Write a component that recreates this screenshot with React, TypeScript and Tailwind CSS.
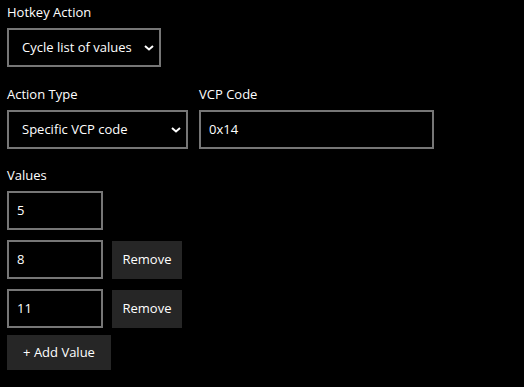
import { useState } from 'react';

function Chevron() {
  return (
    <svg width="10" height="6" viewBox="0 0 10 6" className="shrink-0">
      <path d="M1 1l4 3.5L9 1" fill="none" stroke="white" strokeWidth="2" />
    </svg>
  );
}

export default function App() {
  const [values] = useState(['5', '8', '11']);

  return (
    <div
      className="min-h-screen w-full bg-black text-white text-[13px] pl-[7px] pt-[3px]"
      style={{ fontFamily: '"Open Sans", "Noto Sans", sans-serif' }}
    >
      {/* Hotkey action */}
      <div className="leading-[18px]">Hotkey Action</div>
      <div className="mt-[7px] flex h-[39px] w-[154px] items-center justify-between border-2 border-[#767676] pl-[13px] pr-[5px]">
        <span>Cycle list of values</span>
        <Chevron />
      </div>

      {/* Action type + VCP code */}
      <div className="mt-[18px] flex gap-[11px]">
        <div>
          <div className="leading-[18px]">Action Type</div>
          <div className="mt-[7px] flex h-[39px] w-[181px] items-center justify-between border-2 border-[#767676] pl-[13px] pr-[5px]">
            <span>Specific VCP code</span>
            <Chevron />
          </div>
        </div>
        <div>
          <div className="leading-[18px]">VCP Code</div>
          <div className="mt-[7px] flex h-[39px] w-[235px] items-center border-2 border-[#767676] px-[8px]">
            0x14
          </div>
        </div>
      </div>

      {/* Values */}
      <div className="mt-[17px] leading-[18px]">Values</div>
      <div className="mt-[7px] flex flex-col gap-[10px]">
        {values.map((v, i) => (
          <div key={v} className="flex items-center gap-[9px]">
            <div className="flex h-[39px] w-[96px] items-center border-2 border-[#767676] px-[8px]">{v}</div>
            {i > 0 && (
              <button className="h-[38px] w-[70px] bg-[#262626] text-white">Remove</button>
            )}
          </div>
        ))}
      </div>
      <button className="mt-[7px] h-[35px] w-[104px] bg-[#262626] text-white">+ Add Value</button>
    </div>
  );
}
